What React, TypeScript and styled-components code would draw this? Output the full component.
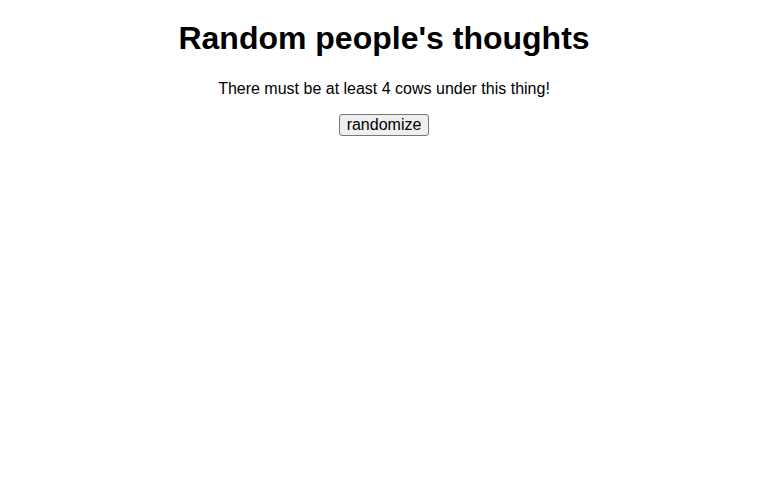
import React, { useState } from "react";
import styled, { createGlobalStyle } from "styled-components";

const thoughts = [
    "There must be at least 4 cows under this thing!",
    "I wonder if the moon is listening.",
    "Who decided socks come in pairs?",
    "Maybe the fridge light stays on after all.",
];

const GlobalStyle = createGlobalStyle`
    body {
        margin: 0;
        background: #fff;
        color: #000;
        font-family: "Liberation Sans", Arial, sans-serif;
    }
`;

export default function App() {
    const [index, setIndex] = useState(0);

    const randomize = () => {
        setIndex(Math.floor(Math.random() * thoughts.length));
    };

    return (
        <SPage>
            <GlobalStyle />
            <STitle>Random people's thoughts</STitle>
            <SThought>{thoughts[index]}</SThought>
            <SButton onClick={randomize}>randomize</SButton>
        </SPage>
    );
}

const SPage = styled.div`
    text-align: center;
`;

const STitle = styled.h1`
    font-size: 32px;
    font-weight: bold;
    margin: 20px 0 23px;
`;

const SThought = styled.p`
    font-size: 16px;
    margin: 16px 0;
`;

const SButton = styled.button`
    font-family: "Liberation Sans", Arial, sans-serif;
    font-size: 16px;
    padding: 1px 7px;
    color: #000;
    background: #efefef;
    border: 1px solid #767676;
    border-radius: 3px;
`;
